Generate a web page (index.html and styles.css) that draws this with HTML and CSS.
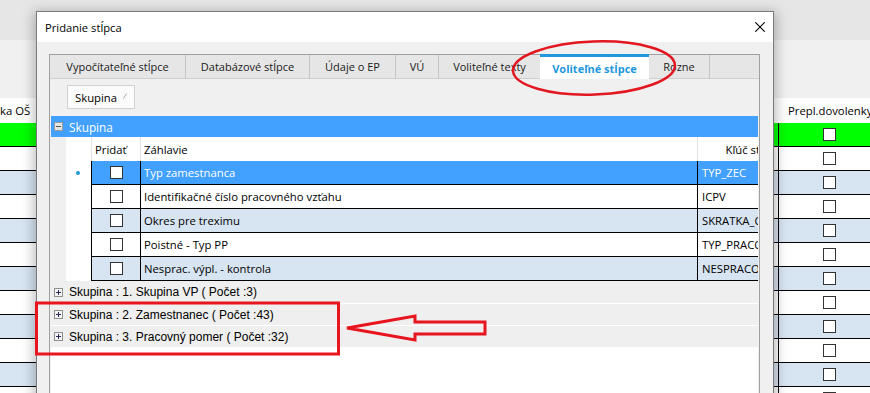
FILE: index.html
```html
<!DOCTYPE html>
<html>
<head>
<meta charset="utf-8">
<title>Pridanie stĺpca</title>
<link rel="stylesheet" href="styles.css">
</head>
<body>
<div class="app">
  <div class="band1"></div>
  <div class="band2"></div>
  <div class="bgrid">
    <div class="brow bhead"><div class="bl">ka OŠ</div><div class="br">Prepl.dovolenky</div></div>
    <div class="brow green"><div class="bl"></div><div class="br"><span class="cb"></span></div></div>
    <div class="brow"><div class="bl"></div><div class="br"><span class="cb"></span></div></div>
    <div class="brow alt"><div class="bl"></div><div class="br"><span class="cb"></span></div></div>
    <div class="brow"><div class="bl"></div><div class="br"><span class="cb"></span></div></div>
    <div class="brow alt"><div class="bl"></div><div class="br"><span class="cb"></span></div></div>
    <div class="brow"><div class="bl"></div><div class="br"><span class="cb"></span></div></div>
    <div class="brow alt"><div class="bl"></div><div class="br"><span class="cb"></span></div></div>
    <div class="brow"><div class="bl"></div><div class="br"><span class="cb"></span></div></div>
    <div class="brow alt"><div class="bl"></div><div class="br"><span class="cb"></span></div></div>
    <div class="brow"><div class="bl"></div><div class="br"><span class="cb"></span></div></div>
    <div class="brow alt"><div class="bl"></div><div class="br"><span class="cb"></span></div></div>
    <div class="brow"><div class="bl"></div><div class="br"><span class="cb"></span></div></div>
  </div>
</div>

<div class="dialog">
  <div class="titlebar">
    <span class="title">Pridanie stĺpca</span>
    <svg class="close" width="10" height="10" viewBox="0 0 10 10"><path d="M0.3 0.3L9.7 9.7M9.7 0.3L0.3 9.7" stroke="#000" stroke-width="1.1" fill="none"/></svg>
  </div>
  <div class="dbody">
    <div class="tabctl">
      <div class="tabstrip">
        <div class="tab t1">Vypočítateľné stĺpce</div>
        <div class="tab t2">Databázové stĺpce</div>
        <div class="tab t3">Údaje o EP</div>
        <div class="tab t4">VÚ</div>
        <div class="tab t5">Voliteľné texty</div>
        <div class="tab active">Voliteľné stĺpce</div>
        <div class="tab t7">Rozne</div>
        <div class="tabfill"></div>
      </div>
      <div class="panel">
        <div class="grouppanel">
          <div class="gbtn"><span>Skupina</span><svg class="sortg" width="4" height="6" viewBox="0 0 4 6"><path d="M0.5 5.5L3.5 0.5" stroke="#a8a8a8" stroke-width="1" fill="none"/></svg></div>
        </div>
        <div class="grid">
          <div class="ghead">
            <svg class="pm" width="9" height="9" viewBox="0 0 9 9"><rect x="0.5" y="0.5" width="8" height="8" fill="#e4e4e4" stroke="#9a9a9a"/><path d="M2 4.5H7" stroke="#555" stroke-width="1"/></svg>
            <span class="ghtext">Skupina</span>
          </div>
          <div class="gcols">
            <div class="ind"></div><div class="rh"></div>
            <div class="hc c1">Pridať</div>
            <div class="hc c2">Záhlavie</div>
            <div class="hc c3">Kľúč stĺpca</div>
          </div>
          <div class="drow sel">
            <div class="ind"></div><div class="rh"><span class="dot"></span></div>
            <div class="dc c1"><span class="cb"></span></div>
            <div class="dc c2">Typ zamestnanca</div>
            <div class="dc c3">TYP_ZEC</div>
          </div>
          <div class="drow">
            <div class="ind"></div><div class="rh"></div>
            <div class="dc c1"><span class="cb"></span></div>
            <div class="dc c2">Identifikačné číslo pracovného vzťahu</div>
            <div class="dc c3">ICPV</div>
          </div>
          <div class="drow alt">
            <div class="ind"></div><div class="rh"></div>
            <div class="dc c1"><span class="cb"></span></div>
            <div class="dc c2">Okres pre treximu</div>
            <div class="dc c3">SKRATKA_OKRESU</div>
          </div>
          <div class="drow">
            <div class="ind"></div><div class="rh"></div>
            <div class="dc c1"><span class="cb"></span></div>
            <div class="dc c2">Poistné - Typ PP</div>
            <div class="dc c3">TYP_PRACOVNEHO_POMERU</div>
          </div>
          <div class="drow alt">
            <div class="ind"></div><div class="rh"></div>
            <div class="dc c1"><span class="cb"></span></div>
            <div class="dc c2">Nesprac. výpl. - kontrola</div>
            <div class="dc c3">NESPRACOVANE_VYPL</div>
          </div>
          <div class="grow first">
            <svg class="pm" width="9" height="9" viewBox="0 0 9 9"><rect x="0.5" y="0.5" width="8" height="8" fill="#f4f4f4" stroke="#8f8f8f"/><path d="M2 4.5H7M4.5 2V7" stroke="#2a2a5a" stroke-width="1"/></svg>
            <span>Skupina : 1. Skupina VP ( Počet :3)</span>
          </div>
          <div class="grow">
            <svg class="pm" width="9" height="9" viewBox="0 0 9 9"><rect x="0.5" y="0.5" width="8" height="8" fill="#f4f4f4" stroke="#8f8f8f"/><path d="M2 4.5H7M4.5 2V7" stroke="#2a2a5a" stroke-width="1"/></svg>
            <span>Skupina : 2. Zamestnanec ( Počet :43)</span>
          </div>
          <div class="grow">
            <svg class="pm" width="9" height="9" viewBox="0 0 9 9"><rect x="0.5" y="0.5" width="8" height="8" fill="#f4f4f4" stroke="#8f8f8f"/><path d="M2 4.5H7M4.5 2V7" stroke="#2a2a5a" stroke-width="1"/></svg>
            <span>Skupina : 3. Pracovný pomer ( Počet :32)</span>
          </div>
        </div>
      </div>
    </div>
  </div>
</div>

<svg class="annot" width="870" height="393" viewBox="0 0 870 393">
  <ellipse cx="594" cy="68" rx="81" ry="26.5" transform="rotate(-2 594 68)" fill="none" stroke="#e3171f" stroke-width="2.5"/>
  <rect x="36.5" y="303" width="302" height="51" fill="none" stroke="#e8141e" stroke-width="3"/>
  <polygon points="347,328 415,316 415,322 485,322 485,334 415,334 415,340" fill="none" stroke="#e8141e" stroke-width="3"/>
</svg>
</body>
</html>
```
FILE: styles.css
```css
* { box-sizing: border-box; }
html, body { margin: 0; padding: 0; }
body {
  width: 870px;
  height: 393px;
  overflow: hidden;
  position: relative;
  background: #fff;
  color: #000;
  font-family: "Open Sans", "Noto Sans", sans-serif;
  font-size: 11px;
}

/* background application */
.app { display: flex; flex-direction: column; height: 393px; }
.band1 { flex: none; height: 40px; background: #e6e6e6; }
.band2 { flex: none; height: 58px; background: #f0f0f0; }
.bgrid { flex: 1; background: #fff; overflow: hidden; }
.brow {
  display: grid;
  grid-template-columns: 778px 92px;
  height: 24px;
  border-bottom: 1px solid #000;
}
.brow.bhead { height: 25px; border-bottom: none; align-items: center; font-size: 11.3px; }
.brow.green { background: #00ff00; }
.brow.alt { background: #d7e4f2; }
.bl { white-space: nowrap; overflow: hidden; }
.bhead .br { padding-left: 10px; white-space: nowrap; overflow: hidden; }
.brow:not(.bhead) .br { border-left: 1px solid #000; padding: 5px 0 0 44px; }
.cb {
  display: block;
  width: 13px;
  height: 13px;
  border: 1px solid #333;
  background: #fff;
}

/* dialog window */
.dialog {
  position: absolute;
  left: 36px;
  top: 11px;
  width: 738px;
  height: 392px;
  border: 1px solid #7a7a7a;
  background: #f0f0f0;
  box-shadow: 0 3px 12px 2px rgba(0, 0, 0, 0.28);
  display: flex;
  flex-direction: column;
  z-index: 2;
}
.titlebar {
  flex: none;
  height: 30px;
  background: #fff;
  display: flex;
  align-items: center;
  justify-content: space-between;
  padding: 0 8px;
}
.title { font-size: 11.2px; }
.close { display: block; }

.dbody {
  flex: 1;
  min-height: 0;
  padding: 12px 13px 0 12px;
  display: flex;
  flex-direction: column;
}
.tabctl {
  flex: 1;
  min-height: 0;
  border: 1px solid #a0a0a0;
  border-bottom: none;
  display: flex;
  flex-direction: column;
}
.tabstrip { flex: none; display: flex; height: 24px; background: #e6e6e6; }
.tab {
  flex: none;
  height: 24px;
  border-bottom: 1px solid #cfcfcf;
  border-right: 1px solid #c4c4c4;
  display: flex;
  align-items: center;
  justify-content: center;
  white-space: nowrap;
  color: #1a1a1a;
}
.t1 { width: 136px; }
.t2 { width: 124px; }
.t3 { width: 86px; }
.t4 { width: 43px; }
.t5 { width: 101px; border-right: none; }
.tab.active {
  width: 109px;
  height: 25px;
  margin-top: -1px;
  background: #fff;
  border-top: 3px solid #1f98dd;
  border-bottom: none;
  border-right: none;
  font-weight: 700;
  color: #1f98dd;
}
.t7 { width: 61px; }
.tabfill { flex: 1; border-bottom: 1px solid #cfcfcf; }

.panel {
  flex: 1;
  min-height: 0;
  background: #f0f0f0;
  padding: 6px 0 0 1px;
  display: flex;
  flex-direction: column;
}
.grouppanel { flex: none; height: 24px; margin-left: 16px; }
.gbtn {
  width: 68px;
  height: 24px;
  border: 1px solid #d2d2d2;
  background: #fbfbfb;
  display: flex;
  align-items: center;
  padding-left: 7px;
  gap: 6px;
  font-size: 11.3px;
}
.sortg { display: block; margin-top: -2px; }

.grid {
  flex: 1;
  margin-top: 7px;
  width: 707px;
  background: #fff;
  overflow: hidden;
  font-size: 11.3px;
}
.ghead {
  height: 21px;
  background: #42a0ff;
  color: #fff;
  display: flex;
  align-items: center;
  padding-left: 3px;
}
.pm { display: block; flex: none; }
.ghtext { margin-left: 6px; font-size: 11.8px; }

.gcols, .drow {
  display: grid;
  grid-template-columns: 15px 25px 49px 557px 112px;
  width: 758px;
  height: 24px;
}
.ind { background: #f0f0f0; }
.rh { background: #fff; display: flex; align-items: center; }
.hc {
  background: #fff;
  border-left: 1px solid #e2e2e2;
  display: flex;
  align-items: center;
  padding-left: 3px;
  white-space: nowrap;
}
.hc.c3 { justify-content: center; padding-left: 0; }
.dot {
  display: block;
  width: 4px;
  height: 4px;
  border-radius: 50%;
  background: #1e9ad6;
  margin-left: 10px;
}
.dc {
  background: #fff;
  border-left: 1px solid #000;
  border-bottom: 1px solid #000;
  display: flex;
  align-items: center;
  padding-left: 3px;
  white-space: nowrap;
  overflow: hidden;
}
.dc.c1 { justify-content: center; padding-left: 0; }
.dc.c3 { padding-left: 4px; }
.drow.sel .dc { background: #42a0ff; color: #fff; }
.drow.alt .dc { background: #d7e4f2; }

.grow {
  height: 22px;
  background: #efefef;
  border-bottom: 1px solid #fff;
  display: flex;
  align-items: center;
  padding-left: 3px;
  gap: 6px;
  font-family: "Liberation Sans", Arial, sans-serif;
  font-size: 12px;
  white-space: nowrap;
}
.grow.first { height: 23px; }

/* annotations drawn over the screenshot */
.annot {
  position: absolute;
  left: 0;
  top: 0;
  z-index: 10;
  pointer-events: none;
}
```
